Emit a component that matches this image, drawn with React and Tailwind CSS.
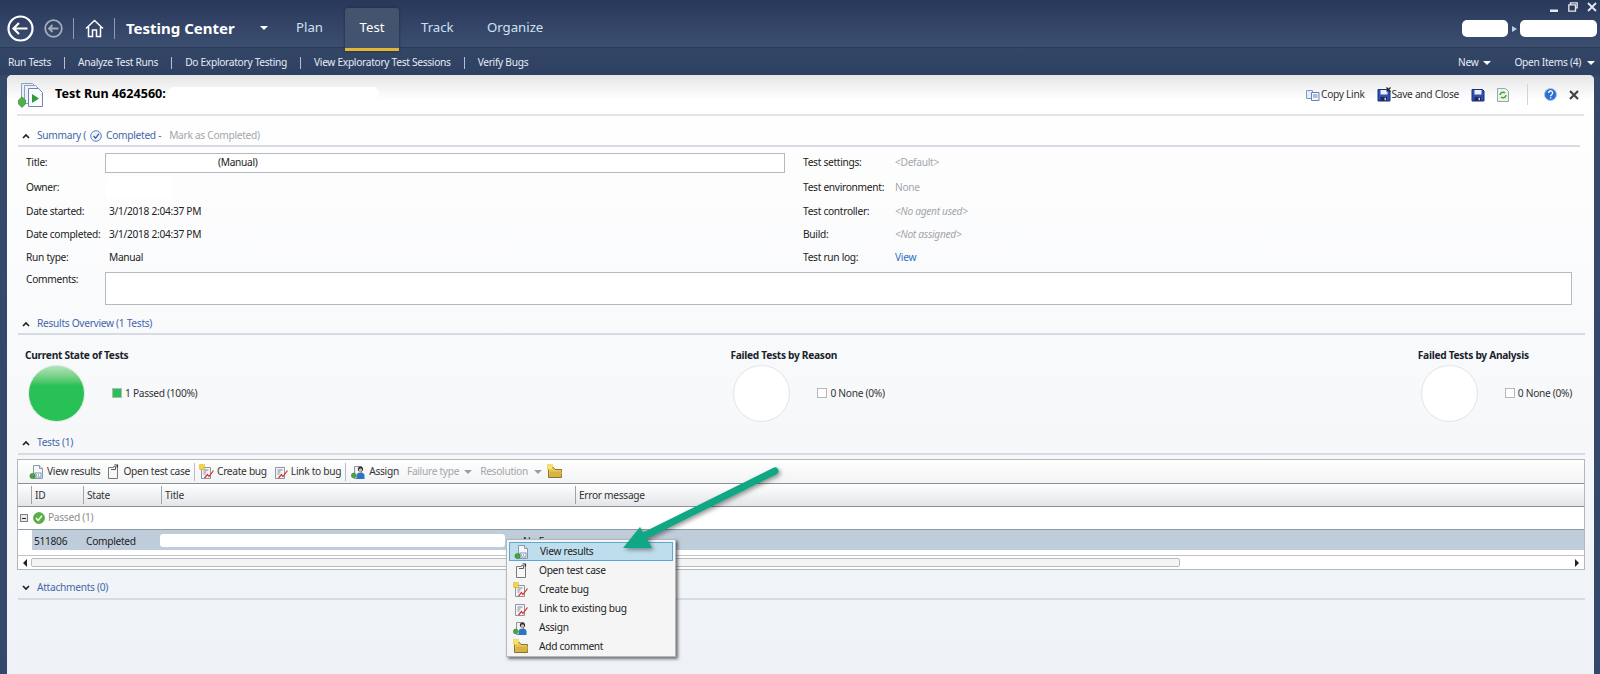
import React from "react";

const ResultsIcon = ({ size = 16 }) => (
  <svg width={size} height={size} viewBox="0 0 16 16" className="shrink-0">
    <path d="M4.5 1.5h6l3 3v10h-9z" fill="#f4f7fa" stroke="#8b98a8" />
    <path d="M10.5 1.5v3h3" fill="#dfe6ee" stroke="#8b98a8" />
    <rect x="6" y="9" width="6" height="4" fill="#fff" stroke="#5c7fa8" strokeWidth="0.8" />
    <path d="M7 11h1m1 0h1" stroke="#41648f" />
    <circle cx="3.5" cy="12" r="2.6" fill="#4aa63c" stroke="#2f7d28" strokeWidth="0.6" />
  </svg>
);

const OpenCaseIcon = ({ size = 16 }) => (
  <svg width={size} height={size} viewBox="0 0 16 16" className="shrink-0">
    <path d="M3.5 3.5h5v-1h2l2 1v11h-9z" fill="#f7f7f3" stroke="#77797c" />
    <path d="M6 5.5h4.5V3" fill="none" stroke="#55585c" />
    <path d="M9.5 1h3v2.5" fill="none" stroke="#333" strokeWidth="1.2" />
  </svg>
);

const BugIcon = ({ star = true, size = 16 }) => (
  <svg width={size} height={size} viewBox="0 0 16 16" className="shrink-0">
    <path d="M2.5 3.5h9v11h-9z" fill="#f4f5f7" stroke="#8d95a0" />
    <path d="M4.5 6h5M4.5 8h3M4.5 10h2" stroke="#7c8794" />
    {star && <rect x="0.5" y="0.5" width="5" height="5" fill="#f3d34a" stroke="#d9ab1c" strokeWidth="0.7" strokeDasharray="1.4 0.8" />}
    <path d="M5.5 14l3-3.5 1.5 2 4.5-6" fill="none" stroke="#d8302c" strokeWidth="1.2" />
  </svg>
);

const AssignIcon = ({ size = 16 }) => (
  <svg width={size} height={size} viewBox="0 0 16 16" className="shrink-0">
    <path d="M3.5 2.5h7v12h-7z" fill="#eef1f5" stroke="#8d95a0" />
    <circle cx="9.5" cy="5" r="2.6" fill="#2b2f3a" />
    <circle cx="9.5" cy="6" r="1.7" fill="#e0b48e" />
    <path d="M5.5 15v-3.5c0-2 2-3 4-3s4 1 4 3V15z" fill="#2f74c0" />
    <circle cx="2.7" cy="11.5" r="2.4" fill="#4aa63c" stroke="#2f7d28" strokeWidth="0.5" />
  </svg>
);

const FolderIcon = ({ size = 16 }) => (
  <svg width={size} height={size} viewBox="0 0 16 16" className="shrink-0">
    <path d="M1.5 3.5h5l1.5 2h6.5v8h-13z" fill="#e9c85f" stroke="#8a7330" />
    <path d="M2 13l1-5.5h12l-1 5.5z" fill="#d7b344" />
    <rect x="0.5" y="0.5" width="5" height="5" fill="#f8e36a" stroke="#e4c02a" strokeWidth="0.7" strokeDasharray="1.4 0.8" />
  </svg>
);

const SaveIcon = ({ close = false }) => (
  <svg width="14" height="15" viewBox="0 0 14 15" className="shrink-0">
    <path d="M1 2.5h10.5l1.5 1.5v10H1z" fill="#2f4fb0" stroke="#1c2f7c" />
    <rect x="3.5" y="3" width="7" height="4.5" fill="#e8f0fb" />
    <rect x="3.5" y="10" width="6.5" height="4" fill="#20285a" />
    <rect x="7.5" y="10.8" width="1.5" height="2.4" fill="#cfd8ea" />
    {close && <path d="M9.5 0.5l4 4m0-4l-4 4" stroke="#222" strokeWidth="1.2" />}
  </svg>
);

const Caret = ({ color = "border-t-white" }) => (
  <span className={`inline-block w-0 h-0 border-x-[4px] border-x-transparent border-t-[4px] ${color}`} />
);

const SectionHeader = ({ open = true, height, pad = "pt-[10px]", children }) => (
  <div className={`${height} ${pad} mx-[11px] flex items-center border-b-2 border-[#d7dbe3] text-[#4467a8]`}>
    <svg width="8" height="6" viewBox="0 0 8 6" className="ml-1 mr-[7px] shrink-0">
      <path d={open ? "M1 5l3-3 3 3" : "M1 1l3 3 3-3"} fill="none" stroke="#222" strokeWidth="1.7" />
    </svg>
    {children}
  </div>
);

const Field = ({ label, height = "h-6", children }) => (
  <div className={`${height} flex items-center`}>
    <span className="w-[83px] shrink-0">{label}</span>
    {children}
  </div>
);

const Donut = ({ title, label, passed = false }) => (
  <div className="flex flex-col">
    <div className="h-4 mt-[13px] flex items-center font-bold text-[#1a1f2b] whitespace-nowrap">{title}</div>
    <div className="flex items-center mt-px ml-[3px]">
      {passed ? (
        <div className="w-[57px] h-[57px] rounded-full bg-linear-to-b from-[#b4e3bc] via-[#28c156] via-35% to-[#28c156] border border-[#d8e8dc]" />
      ) : (
        <div className="w-[57px] h-[57px] rounded-full bg-white border border-[#e2e4e8]" />
      )}
      <div className="ml-[27px] flex items-center gap-[3px] whitespace-nowrap text-[#333]">
        <span className={`w-[10px] h-[10px] border border-[#b4b8bc] ${passed ? "bg-[#27c157]" : "bg-white"}`} />
        {label}
      </div>
    </div>
  </div>
);

const ToolBtn = ({ icon, label, className = "" }) => (
  <div className={`flex items-center gap-[2px] whitespace-nowrap ${className}`}>
    {icon}
    <span>{label}</span>
  </div>
);

const subNav = ["Run Tests", "Analyze Test Runs", "Do Exploratory Testing", "View Exploratory Test Sessions", "Verify Bugs"];

const menuItems = [
  { label: "View results", icon: <ResultsIcon /> },
  { label: "Open test case", icon: <OpenCaseIcon /> },
  { label: "Create bug", icon: <BugIcon /> },
  { label: "Link to existing bug", icon: <BugIcon star={false} /> },
  { label: "Assign", icon: <AssignIcon /> },
  { label: "Add comment", icon: <FolderIcon /> },
];

export default function App() {
  return (
    <div className="relative w-[1600px] h-[674px] overflow-hidden flex flex-col bg-[#34486c] font-['Noto_Sans',sans-serif] text-[#222]">
      {/* top bar */}
      <div className="h-[48px] shrink-0 pt-[9px] flex items-center bg-linear-to-b from-[#29385a] to-[#3c4f71] border-b border-[#2b3a58] text-[#cfe0f2] text-[13.2px]">
        <svg width="27" height="27" viewBox="0 0 27 27" className="ml-[7px] shrink-0">
          <circle cx="13.5" cy="13.5" r="12" fill="none" stroke="#fff" strokeWidth="2.2" />
          <path d="M20.5 13.5H7m5-5.5l-5.5 5.5 5.5 5.5" fill="none" stroke="#fff" strokeWidth="2.2" />
        </svg>
        <svg width="19" height="19" viewBox="0 0 19 19" className="ml-[10px] shrink-0">
          <circle cx="9.5" cy="9.5" r="8.3" fill="none" stroke="#a5adba" strokeWidth="1.8" />
          <path d="M14.5 9.5H5m3.5-3.5L5 9.5 8.5 13" fill="none" stroke="#a5adba" strokeWidth="1.8" />
        </svg>
        <div className="ml-[10px] w-px h-[21px] bg-[#8f9bb0]" />
        <svg width="19" height="19" viewBox="0 0 19 19" className="ml-[11px] shrink-0">
          <path d="M1 9.5L9.5 1.5 18 9.5M3.5 8v9.5h4V11h4v6.5h4V8" fill="none" stroke="#fff" strokeWidth="1.5" />
        </svg>
        <div className="ml-[10px] w-px h-[21px] bg-[#8f9bb0]" />
        <span className="ml-[11px] w-[110px] font-bold text-[15px] text-white whitespace-nowrap">Testing Center</span>
        <span className="ml-[24px] flex"><Caret /></span>
        <span className="ml-[28px] w-[25px]">Plan</span>
        <div className="relative z-10 self-start -mt-px ml-[24px] w-[54px] h-[43px] flex items-center justify-center text-white bg-linear-to-b from-[#46536e] to-[#41536f] border-b-[3px] border-[#e3b535] rounded-t-[3px] shadow-[0_0_3px_#1c2840]">
          Test
        </div>
        <span className="ml-[22px] w-[33px]">Track</span>
        <span className="ml-[33px]">Organize</span>
        <div className="ml-auto mr-[3px] self-start -mt-[9px] flex flex-col items-end">
          <div className="h-[14px] flex items-start gap-[9px] pt-[2px]">
            <svg width="10" height="10" viewBox="0 0 10 10"><rect x="1" y="7.5" width="8" height="2.5" fill="#e6eaf0" /></svg>
            <svg width="10" height="10" viewBox="0 0 10 10"><path d="M2.5 2.5V.8h6.7v5H7.5M.8 2.8h6.7v6.4H.8z" fill="none" stroke="#e6eaf0" strokeWidth="1.3" /></svg>
            <svg width="10" height="10" viewBox="0 0 10 10"><path d="M1 1l8 8m0-8l-8 8" stroke="#e6eaf0" strokeWidth="1.8" /></svg>
          </div>
          <div className="mt-[6px] flex items-center">
            <span className="w-[46px] h-[17px] bg-white rounded-[5px]" />
            <span className="ml-[4px] mr-[3px] w-0 h-0 border-y-[3px] border-y-transparent border-l-[5px] border-l-[#b8d4ec]" />
            <span className="w-[77px] h-[17px] bg-white rounded-[5px]" />
          </div>
        </div>
      </div>

      {/* sub nav */}
      <div className="h-[27px] shrink-0 pt-[2px] flex items-center pl-2 pr-[5px] bg-linear-to-b from-[#344666] to-[#2f4162] text-[#e4ecf5] text-[10.2px] tracking-[-0.3px] whitespace-nowrap">
        {subNav.map((item, i) => (
          <React.Fragment key={item}>
            {i > 0 && <span className="mx-[13px] w-px h-[12px] bg-[#b5bfcd]" />}
            <span>{item}</span>
          </React.Fragment>
        ))}
        <span className="ml-auto">New</span>
        <span className="ml-[5px] flex"><Caret /></span>
        <span className="ml-[23px]">Open Items (4)</span>
        <span className="ml-[6px] flex"><Caret /></span>
      </div>

      {/* main panel */}
      <div className="flex-1 ml-[7px] mr-[6px] rounded-t-[5px] flex flex-col bg-linear-to-b from-white via-[#f8f9fb] via-50% to-[#eef2f6] text-[10.2px] tracking-[-0.3px]">
        <div className="h-[41px] shrink-0 px-[10px] flex items-center rounded-t-[5px] bg-linear-to-b from-[#e6e6e6] to-white to-60%">
          <div className="flex-1 h-full flex items-center border-b-2 border-[#e2e4e8]">
            <svg width="26" height="26" viewBox="0 0 26 26" className="ml-px shrink-0">
              <path d="M3.5 1.5h11l3 3v15h-14z" fill="#e9eef6" stroke="#8ea1c0" />
              <path d="M6.5 3.5h11l3 3v15h-14z" fill="#eef2f8" stroke="#8ea1c0" />
              <path d="M10.5 6.5h10l4 4v14h-14z" fill="#fbfcff" stroke="#6d86ad" />
              <path d="M14 12l7 4.5-7 4.5z" fill="#2f9c3e" />
              <path d="M4 15l3.5 3v4L4 25.5 0.5 22v-4z" fill="#4fb248" stroke="#2e7d2c" strokeWidth="0.6" />
            </svg>
            <span className="ml-[11px] font-bold text-[12.6px] tracking-normal text-black whitespace-nowrap">Test Run 4624560:</span>
            <span className="ml-[2px] w-[211px] h-4 bg-white rounded-[6px]" />
            <div className="ml-auto flex items-center text-[#333] whitespace-nowrap">
              <svg width="14" height="12" viewBox="0 0 14 12" className="mr-px">
                <path d="M.5 1.5h6v8h-6z" fill="#e6edf7" stroke="#7d9cc4" />
                <path d="M5.5 3.5h7.5v8H5.5z" fill="#f4f8fc" stroke="#5f86bc" />
                <path d="M7 6h4.5M7 8h4.5" stroke="#5f86bc" />
              </svg>
              <span>Copy Link</span>
              <span className="ml-[12px] flex"><SaveIcon close /></span>
              <span className="ml-px">Save and Close</span>
              <span className="ml-[12px] flex"><SaveIcon /></span>
              <svg width="12" height="14" viewBox="0 0 12 14" className="ml-[12px]">
                <path d="M.5.5h8l3 3v10H.5z" fill="#eef3ea" stroke="#9aa6ad" />
                <path d="M3 7a3 3 0 0 1 5-2M9 7a3 3 0 0 1-5 2" fill="none" stroke="#3fa33c" strokeWidth="1.5" />
              </svg>
              <span className="ml-[18px] w-px h-[21px] bg-[#d2d4d8]" />
              <svg width="13" height="13" viewBox="0 0 13 13" className="ml-[16px]">
                <circle cx="6.5" cy="6.5" r="6" fill="#2f6fd0" stroke="#a5c3ea" />
                <path d="M4.6 5a2 2 0 1 1 3 1.7c-.7.4-1 .8-1 1.5" fill="none" stroke="#fff" strokeWidth="1.3" />
                <rect x="6" y="9.2" width="1.3" height="1.3" fill="#fff" />
              </svg>
              <svg width="10" height="10" viewBox="0 0 10 10" className="ml-[12px] mr-[5px]">
                <path d="M1 1l8 8m0-8l-8 8" stroke="#444" strokeWidth="2.2" />
              </svg>
            </div>
          </div>
        </div>

        <SectionHeader height="h-[31px] shrink-0 mr-[14px]">
          <span>Summary (</span>
          <svg width="12" height="12" viewBox="0 0 12 12" className="mx-1">
            <circle cx="6" cy="6" r="5.3" fill="#eef3fb" stroke="#5f82bd" />
            <path d="M3.5 6l2 2.2L9 3.6" fill="none" stroke="#3560a8" strokeWidth="1.3" />
          </svg>
          <span>Completed -</span>
          <span className="ml-2 text-[#a3a6ab]">Mark as Completed)</span>
        </SectionHeader>

        <div className="shrink-0 mt-1 mx-[19px] flex">
          <div className="w-[777px] shrink-0">
            <Field label="Title:">
              <div className="w-[680px] h-5 -ml-[4px] pl-[112px] flex items-center bg-white border border-[#b7babd]">(Manual)</div>
            </Field>
            <Field label="Owner:" height="h-[25px]">
              <div className="w-[67px] h-[22px] -ml-[4px] bg-white rounded-[4px]" />
            </Field>
            <Field label="Date started:" height="h-[23px]">3/1/2018 2:04:37 PM</Field>
            <Field label="Date completed:" height="h-[23px]">3/1/2018 2:04:37 PM</Field>
            <Field label="Run type:">Manual</Field>
          </div>
          <div className="flex-1 whitespace-nowrap">
            <Field label="Test settings:"><span className="ml-[9px] text-[#a3a6ab]">&lt;Default&gt;</span></Field>
            <Field label="Test environment:" height="h-[25px]"><span className="ml-[9px] text-[#a3a6ab]">None</span></Field>
            <Field label="Test controller:" height="h-[23px]"><span className="ml-[9px] italic text-[#a3a6ab]">&lt;No agent used&gt;</span></Field>
            <Field label="Build:" height="h-[23px]"><span className="ml-[9px] italic text-[#a3a6ab]">&lt;Not assigned&gt;</span></Field>
            <Field label="Test run log:"><span className="ml-[9px] text-[#2b6fc4]">View</span></Field>
          </div>
        </div>

        <div className="shrink-0 mt-[2px] ml-[19px] mr-[22px] flex items-start">
          <span className="w-[79px] shrink-0 leading-[14px]">Comments:</span>
          <div className="flex-1 h-[33px] bg-white border border-[#b7babd]" />
        </div>

        <SectionHeader height="h-[30px] shrink-0 mr-[9px]">Results Overview (1 Tests)</SectionHeader>

        <div className="h-[90px] shrink-0 pl-[18px] pr-[22px] flex justify-between">
          <Donut title="Current State of Tests" label="1 Passed (100%)" passed />
          <Donut title="Failed Tests by Reason" label="0 None (0%)" />
          <Donut title="Failed Tests by Analysis" label="0 None (0%)" />
        </div>

        <SectionHeader height="h-[30px] shrink-0 mr-[9px]" pad="pt-2">Tests (1)</SectionHeader>

        {/* tests grid */}
        <div className="relative h-[111px] shrink-0 mt-1 ml-[10px] mr-[9px] flex flex-col border border-[#b4b7ba] bg-white">
          <div className="h-[24px] shrink-0 pl-[11px] flex items-center bg-linear-to-b from-white to-[#f2f3f5] border-b border-[#8d9094] text-[#333] whitespace-nowrap">
            <ToolBtn icon={<ResultsIcon />} label="View results" />
            <ToolBtn icon={<OpenCaseIcon />} label="Open test case" className="ml-[5px]" />
            <span className="ml-[4px] w-px h-[18px] bg-[#b8bbbf]" />
            <ToolBtn icon={<BugIcon />} label="Create bug" className="ml-[4px]" />
            <ToolBtn icon={<BugIcon star={false} />} label="Link to bug" className="ml-[6px]" />
            <span className="ml-[4px] w-px h-[18px] bg-[#b8bbbf]" />
            <ToolBtn icon={<AssignIcon />} label="Assign" className="ml-[5px]" />
            <span className="ml-[8px] text-[#a3a6ab]">Failure type</span>
            <span className="ml-[5px] flex"><Caret color="border-t-[#9a9da2]" /></span>
            <span className="ml-[8px] text-[#a3a6ab]">Resolution</span>
            <span className="ml-[6px] flex"><Caret color="border-t-[#9a9da2]" /></span>
            <span className="ml-[5px] flex"><FolderIcon /></span>
          </div>
          <div className="h-[23px] shrink-0 pl-[13px] grid grid-cols-[52px_78px_414px_1fr] items-center bg-linear-to-b from-white to-[#e3e5e9] border-b border-[#8d9094] text-[#333]">
            <span className="pl-[3px] border-l border-[#a0a3a8] h-[18px] leading-[18px]">ID</span>
            <span className="pl-[3px] border-l border-[#a0a3a8] h-[18px] leading-[18px]">State</span>
            <span className="pl-[3px] border-l border-[#a0a3a8] h-[18px] leading-[18px]">Title</span>
            <span className="pl-[3px] border-l border-[#a0a3a8] h-[18px] leading-[18px]">Error message</span>
          </div>
          <div className="h-[23px] shrink-0 pl-[2px] flex items-center border-b border-[#8d9aa8] text-[#8a8d92]">
            <span className="w-2 h-2 flex items-center justify-center bg-[#e8e9ea] border border-[#7b7e82]">
              <span className="w-1 h-px bg-[#222]" />
            </span>
            <svg width="12" height="12" viewBox="0 0 12 12" className="ml-[5px]">
              <circle cx="6" cy="6" r="5.5" fill="#57b33f" stroke="#3f8d31" strokeWidth="0.6" />
              <path d="M3 6l2.2 2.4L9 3.6" fill="none" stroke="#fff" strokeWidth="1.5" />
            </svg>
            <span className="ml-[3px]">Passed (1)</span>
          </div>
          <div className="h-[20px] shrink-0 ml-[14px] pt-1 flex items-center bg-[#bfcddb] text-[#222] whitespace-nowrap">
            <span className="w-[54px] pl-[2px]">511806</span>
            <span className="w-[74px]">Completed</span>
            <span className="w-[345px] h-[13px] -mt-1 bg-white rounded-[3px]" />
            <span className="ml-[18px]">No Error</span>
          </div>
          <div className="flex-1 mt-[5px] flex items-center border-t border-[#c2c4c6] bg-white">
            <span className="ml-[5px] w-0 h-0 border-y-[4px] border-y-transparent border-r-[4px] border-r-[#222]" />
            <span className="ml-[4px] w-[1149px] h-[9px] bg-[#f4f4f4] border border-[#b9bcbf] rounded-[2px]" />
            <span className="ml-auto mr-[5px] w-0 h-0 border-y-[4px] border-y-transparent border-l-[4px] border-l-[#222]" />
          </div>

          {/* context menu */}
          <div className="absolute left-[488px] top-[79px] w-[170px] h-[118px] p-[2px] bg-[#f5f5f5] border border-[#b5b8bb] shadow-[2px_2px_3px_rgba(0,0,0,0.55)] text-[#222] z-10">
            {menuItems.map((item, i) => (
              <div key={item.label} className={`h-[19px] flex items-center ${i === 0 ? "bg-[#bfdeed] border border-[#5ba7d6]" : ""}`}>
                <span className="w-[24px] shrink-0 flex justify-center">{item.icon}</span>
                <span className="ml-[6px]">{item.label}</span>
              </div>
            ))}
          </div>
        </div>

        <SectionHeader open={false} height="h-[30px] shrink-0 mr-[9px]" pad="pt-2">Attachments (0)</SectionHeader>
      </div>

      {/* annotation arrow */}
      <svg width="180" height="100" viewBox="0 0 180 100" className="absolute left-[610px] top-[460px] z-20 drop-shadow-[2px_2px_2px_rgba(0,0,0,0.4)]">
        <path d="M165 11L34 76" fill="none" stroke="#10a884" strokeWidth="7" strokeLinecap="round" />
        <path d="M13 88L30 67 42 88z" fill="#10a884" />
      </svg>
    </div>
  );
}
